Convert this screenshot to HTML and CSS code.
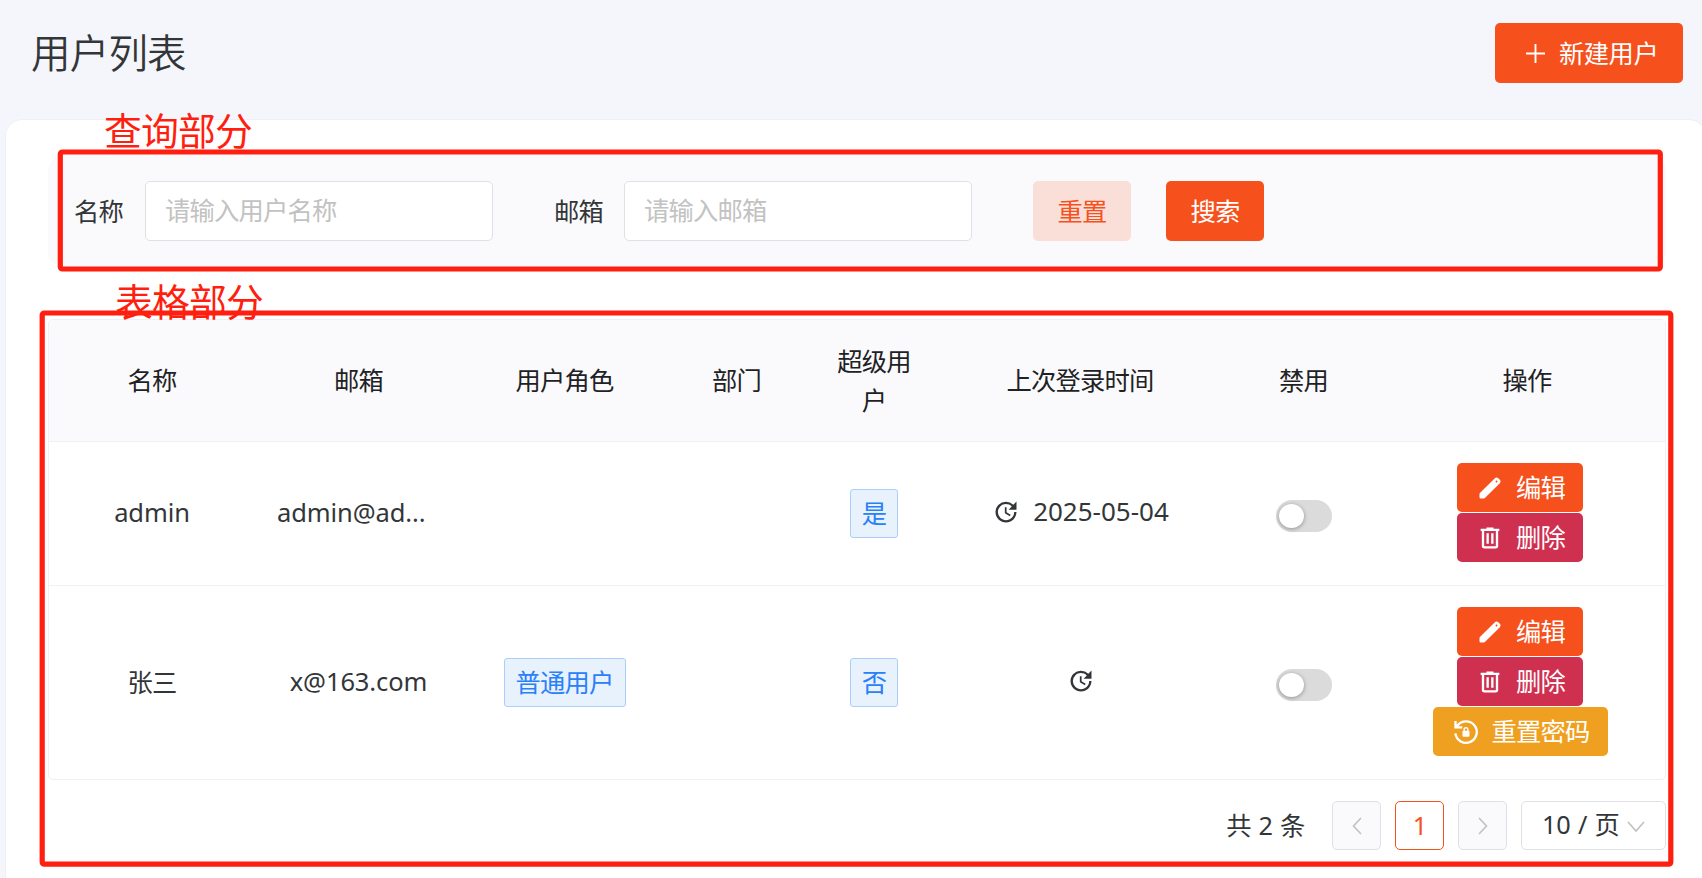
FILE: index.html
```html
<!DOCTYPE html>
<html lang="zh-CN">

<head>
  <meta charset="UTF-8">
  <meta name="viewport" content="width=device-width, initial-scale=1.0">
  <title>用户列表</title>
  <link rel="stylesheet" href="styles.css">
</head>

<body>
  <!-- Shared icons -->
  <svg class="icon-defs" aria-hidden="true">
    <symbol id="icon-edit" viewBox="0 0 24 24">
      <path d="M4 21q-.425 0-.712-.288T3 20v-2.425q0-.4.15-.763t.425-.637L16.2 3.575q.3-.275.663-.425t.762-.15t.775.15t.65.45L20.425 5q.3.275.437.65T21 6.4q0 .4-.138.763t-.437.662l-12.6 12.6q-.275.275-.638.425t-.762.15zM17.6 7.4L18.6 6.4L17.6 5.4l-1 1z" />
    </symbol>
    <symbol id="icon-delete" viewBox="0 0 24 24">
      <path d="M7 21q-.825 0-1.412-.587T5 19V6H4V4h5V3h6v1h5v2h-1v13q0 .825-.587 1.413T17 21zM17 6H7v13h10zM9 17h2V8H9zm4 0h2V8h-2z" />
    </symbol>
    <symbol id="icon-update" viewBox="0 0 24 24">
      <path d="M21 10.12h-6.78l2.74-2.82c-2.73-2.7-7.15-2.8-9.88-.1a6.875 6.875 0 0 0 0 9.8c2.73 2.7 7.15 2.7 9.88 0c1.36-1.35 2.04-2.92 2.04-4.9h2c0 1.98-.88 4.55-2.64 6.29c-3.51 3.48-9.21 3.48-12.72 0c-3.5-3.47-3.53-9.11-.02-12.58a8.987 8.987 0 0 1 12.65 0L21 3zM12.5 8v4.25l3.5 2.08l-.72 1.21L11 13V8z" />
    </symbol>
    <symbol id="icon-lock-reset" viewBox="0 0 24 24">
      <path d="M4.2 7.2A9.2 9.2 0 1 1 2.9 13.2M3 2.6V8h5.8" fill="none" stroke="currentColor" stroke-width="2" />
      <path d="M9.8 16q-.8 0-.8-.8v-3.4q0-.8.8-.8V10a2.2 2.2 0 0 1 4.4 0v1q.8 0 .8.8v3.4q0 .8-.8.8zM11 11h2v-1a1 1 0 0 0-2 0z" />
    </symbol>
  </svg>

  <header class="page-header">
    <h2 class="page-title">用户列表</h2>
    <button class="btn btn-primary btn-create">
      <svg class="icon-plus" viewBox="0 0 20 20"><path d="M10 0v20M0 10h20" /></svg>
      新建用户
    </button>
  </header>

  <main class="card">
    <section class="query-bar">
      <label class="query-label">名称</label>
      <input class="query-input" type="text" placeholder="请输入用户名称">
      <label class="query-label">邮箱</label>
      <input class="query-input" type="text" placeholder="请输入邮箱">
      <button class="btn btn-secondary">重置</button>
      <button class="btn btn-primary btn-search">搜索</button>
    </section>

    <section class="table">
      <div class="row row-head">
        <div class="cell">名称</div>
        <div class="cell">邮箱</div>
        <div class="cell">用户角色</div>
        <div class="cell">部门</div>
        <div class="cell">超级用户</div>
        <div class="cell">上次登录时间</div>
        <div class="cell">禁用</div>
        <div class="cell">操作</div>
      </div>
      <div class="row row-first">
        <div class="cell latin">admin</div>
        <div class="cell cell-left latin">admin@ad...</div>
        <div class="cell"></div>
        <div class="cell"></div>
        <div class="cell"><span class="tag">是</span></div>
        <div class="cell cell-time latin"><svg class="icon"><use href="#icon-update" /></svg><span>2025-05-04</span></div>
        <div class="cell"><span class="switch"></span></div>
        <div class="cell cell-actions">
          <button class="btn-small btn-primary"><svg class="icon"><use href="#icon-edit" /></svg>编辑</button>
          <button class="btn-small btn-error"><svg class="icon"><use href="#icon-delete" /></svg>删除</button>
        </div>
      </div>
      <div class="row row-second">
        <div class="cell">张三</div>
        <div class="cell latin">x@163.com</div>
        <div class="cell"><span class="tag">普通用户</span></div>
        <div class="cell"></div>
        <div class="cell"><span class="tag">否</span></div>
        <div class="cell cell-time latin"><svg class="icon"><use href="#icon-update" /></svg></div>
        <div class="cell"><span class="switch"></span></div>
        <div class="cell cell-actions">
          <button class="btn-small btn-primary"><svg class="icon"><use href="#icon-edit" /></svg>编辑</button>
          <button class="btn-small btn-error"><svg class="icon"><use href="#icon-delete" /></svg>删除</button>
          <button class="btn-small btn-warning"><svg class="icon"><use href="#icon-lock-reset" /></svg>重置密码</button>
        </div>
      </div>
    </section>

    <nav class="pagination">
      <span class="page-total">共 2 条</span>
      <button class="page-item page-disabled"><svg viewBox="0 0 10 18"><path d="M9 1L1.5 9L9 17" /></svg></button>
      <button class="page-item page-active">1</button>
      <button class="page-item page-disabled"><svg viewBox="0 0 10 18"><path d="M1 1l7.5 8L1 17" /></svg></button>
      <div class="page-size">
        <span>10 / 页</span>
        <svg class="caret" viewBox="0 0 18 11"><path d="M1 1l8 9l8-9" /></svg>
      </div>
    </nav>
  </main>

  <!-- Section markers -->
  <svg class="markers" viewBox="0 0 1702 878">
    <rect x="60.3" y="152" width="1600" height="117" rx="2" />
    <rect x="42.2" y="313" width="1628.6" height="551.2" rx="2" />
  </svg>
  <span class="marker-label marker-query">查询部分</span>
  <span class="marker-label marker-table">表格部分</span>
</body>

</html>
```

FILE: styles.css
```css
* {
  box-sizing: border-box;
}

body {
  margin: 0;
  height: 878px;
  position: relative;
  overflow: hidden;
  background-color: #f5f6fb;
  color: #333639;
  font-family: "Noto Sans", "Noto Sans CJK SC", sans-serif;
  font-size: 25.3px;
  font-weight: 400;
  letter-spacing: -0.8px;
  line-height: 39px;
}

button,
input {
  font: inherit;
  letter-spacing: inherit;
  border: none;
  padding: 0;
}

.icon-defs {
  display: none;
}

.icon {
  width: 28px;
  height: 28px;
  flex: none;
  fill: currentColor;
}

/* Header */
.page-header {
  height: 119px;
  padding: 23px 19px 0 31px;
  display: flex;
  justify-content: space-between;
  align-items: flex-start;
}

.page-title {
  margin: 0;
  font-size: 39.5px;
  font-weight: 350;
  line-height: 60px;
}

.btn {
  width: 98px;
  height: 60px;
  border-radius: 5px;
  display: flex;
  align-items: center;
  justify-content: center;
}

.btn-primary {
  background: #f6511d;
  color: #fff;
}

.btn-secondary {
  margin-left: 61px;
  background: #f9dfd8;
  color: #f6511d;
}

.btn-error {
  background: #d03050;
  color: #fff;
}

.btn-warning {
  background: #f0a020;
  color: #fff;
}

.btn-create {
  width: 188px;
  justify-content: flex-start;
  padding-left: 31px;
  letter-spacing: -0.5px;
}

.btn-search {
  margin-left: 35px;
}

.icon-plus {
  width: 19px;
  height: 19px;
  margin-right: 14px;
  fill: none;
  stroke: currentColor;
  stroke-width: 2;
}

/* Card */
.card {
  width: 1701px;
  height: 780px;
  margin-left: 5px;
  padding: 35px 39px 0 42px;
  border: 1px solid #efeff5;
  border-radius: 17px;
  background: #fff;
}

.query-bar {
  height: 112px;
  padding: 0 27px 0 26px;
  display: flex;
  align-items: center;
  background: #fafafc;
  border-radius: 16px;
}

.query-label {
  width: 49px;
  margin-right: 22px;
  flex: none;
  white-space: nowrap;
}

.query-input {
  width: 348px;
  height: 60px;
  padding: 0 19px 2px;
  border: 1px solid #e0e0e6;
  border-radius: 5px;
  background: #fff;
}

.query-input + .query-label {
  margin-left: 61px;
  margin-right: 21px;
}

.query-input::placeholder {
  color: #c2c2c2;
  opacity: 1;
}

/* Table */
.table {
  margin-top: 52px;
  border: 1px solid #efeff5;
  border-radius: 5px;
  overflow: hidden;
}

.row {
  display: grid;
  grid-template-columns: 207px 206px 206px 138px 137px 275px 172px 275px;
  align-items: center;
}

.row-head {
  height: 122px;
  background: #fafafc;
  border-bottom: 1px solid #efeff5;
  color: #1f2225;
}

.row-first {
  height: 144px;
  border-bottom: 1px solid #efeff5;
}

.row-second {
  height: 193px;
}

.cell {
  padding: 0 22px 0 21px;
  text-align: center;
  display: flex;
  justify-content: center;
}

.cell-left {
  justify-content: flex-start;
}

.latin {
  padding-bottom: 3px;
  font-size: 25.5px;
  letter-spacing: -0.1px;
}

.cell-time {
  align-items: center;
  gap: 13px;
  padding-right: 21px;
  font-size: 26px;
  letter-spacing: 0;
}

.cell-time span {
  margin-top: -2px;
}

.cell-actions {
  flex-direction: column;
  align-items: center;
  gap: 1px;
  padding-right: 36px;
  padding-bottom: 2px;
}

.tag {
  height: 49px;
  padding: 0 11px;
  border: 1px solid #abcffb;
  border-radius: 3px;
  background: #e8f2fd;
  color: #2a80f7;
  line-height: 47px;
}

.switch {
  width: 56px;
  height: 32px;
  margin-top: 4px;
  padding: 4px 3px;
  border-radius: 16px;
  background: #dbdbdb;
}

.switch::before {
  content: "";
  display: block;
  width: 25px;
  height: 24px;
  border-radius: 50%;
  background: #fff;
  box-shadow: 0 1px 4px rgba(0, 0, 0, 0.35);
}

.btn-small {
  height: 49px;
  padding: 0 18px 0 19px;
  border-radius: 5px;
  display: flex;
  align-items: center;
  gap: 12px;
}

/* Pagination */
.pagination {
  margin-top: 21px;
  display: flex;
  justify-content: flex-end;
  align-items: center;
  gap: 14px;
}

.page-total {
  margin-right: 13px;
  letter-spacing: -0.3px;
  word-spacing: 1px;
}

.page-item {
  width: 49px;
  height: 49px;
  border: 1px solid #e0e0e6;
  border-radius: 5px;
  background: #fff;
  display: flex;
  align-items: center;
  justify-content: center;
}

.page-item svg {
  width: 10px;
  height: 18px;
}

.page-item svg,
.caret {
  fill: none;
  stroke: #c2c2c2;
  stroke-width: 1.7;
}

.page-disabled {
  background: #fafafc;
}

.page-active {
  border-color: #f6511d;
  color: #f6511d;
}

.page-size {
  width: 145px;
  height: 49px;
  padding: 0 20px 2px 20px;
  border: 1px solid #e0e0e6;
  border-radius: 5px;
  display: flex;
  align-items: center;
  justify-content: space-between;
  white-space: nowrap;
  letter-spacing: -0.2px;
  word-spacing: 1px;
}

.caret {
  width: 18px;
  height: 11px;
  margin-top: 3px;
  flex: none;
}

/* Section markers */
.markers {
  position: absolute;
  top: 0;
  left: 0;
  width: 1702px;
  height: 878px;
  fill: none;
  stroke: #ff1f10;
  stroke-width: 5.2;
}

.marker-label {
  position: absolute;
  color: #ff1f10;
  font-size: 37.8px;
  line-height: 44px;
  white-space: nowrap;
}

.marker-query {
  left: 104px;
  top: 109px;
}

.marker-table {
  left: 115px;
  top: 280px;
}
```
